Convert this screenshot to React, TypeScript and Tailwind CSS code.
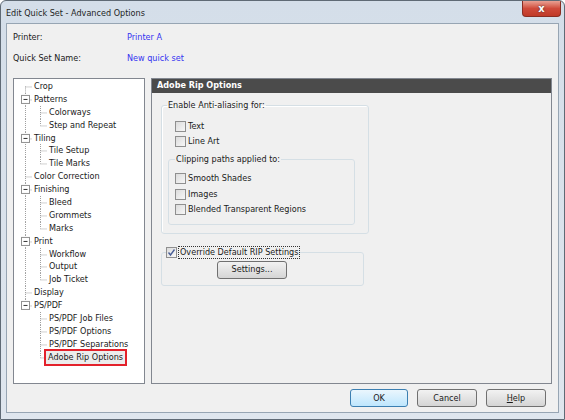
import React from "react";

type Node = { label: string; children?: string[] };

const tree: Node[] = [
  { label: "Crop" },
  { label: "Patterns", children: ["Colorways", "Step and Repeat"] },
  { label: "Tiling", children: ["Tile Setup", "Tile Marks"] },
  { label: "Color Correction" },
  { label: "Finishing", children: ["Bleed", "Grommets", "Marks"] },
  { label: "Print", children: ["Workflow", "Output", "Job Ticket"] },
  { label: "Display" },
  { label: "PS/PDF", children: ["PS/PDF Job Files", "PS/PDF Options", "PS/PDF Separations", "Adobe Rip Options"] },
];

const ROW = 12.9;
const DOT = "#a0a0a0";

function RootGutter({ first, last, expandable }: { first: boolean; last: boolean; expandable: boolean }) {
  const mid = ROW / 2;
  return (
    <svg width="19" height={ROW} className="shrink-0">
      <line x1="11.5" y1={first ? mid : 0} x2="11.5" y2={last ? mid : ROW} stroke={DOT} strokeDasharray="1 1" />
      <line x1="11.5" y1={mid + 0.5} x2="18" y2={mid + 0.5} stroke={DOT} strokeDasharray="1 1" />
      {expandable && (
        <g>
          <rect x="7.5" y={mid - 4} width="8" height="8" fill="#fff" stroke="#919191" />
          <line x1="9.5" y1={mid} x2="13.5" y2={mid} stroke="#333" />
        </g>
      )}
    </svg>
  );
}

function ChildGutter({ rootContinues, last }: { rootContinues: boolean; last: boolean }) {
  const mid = ROW / 2;
  return (
    <svg width="34" height={ROW} className="shrink-0">
      {rootContinues && <line x1="11.5" y1="0" x2="11.5" y2={ROW} stroke={DOT} strokeDasharray="1 1" />}
      <line x1="26.5" y1="0" x2="26.5" y2={last ? mid : ROW} stroke={DOT} strokeDasharray="1 1" />
      <line x1="26.5" y1={mid + 0.5} x2="33" y2={mid + 0.5} stroke={DOT} strokeDasharray="1 1" />
    </svg>
  );
}

function Tree() {
  return (
    <div className="w-[132px] shrink-0 border border-[#828790] bg-white pt-[1px]">
      {tree.map((node, i) => {
        const lastRoot = i === tree.length - 1;
        return (
          <div key={node.label}>
            <div className="flex items-center" style={{ height: ROW }}>
              <RootGutter first={i === 0} last={lastRoot} expandable={!!node.children} />
              <span className="pl-[1px] leading-none">{node.label}</span>
            </div>
            {node.children?.map((c, j) => {
              const selected = c === "Adobe Rip Options";
              return (
                <div key={c} className="flex items-center" style={{ height: ROW }}>
                  <ChildGutter rootContinues={!lastRoot} last={j === node.children!.length - 1} />
                  <span
                    className={
                      selected
                        ? "ml-[-2px] whitespace-nowrap bg-[#ececec] px-[2px] py-[2px] leading-none outline-2 outline-[#e3212b]"
                        : "whitespace-nowrap pl-[1px] leading-none"
                    }
                  >
                    {c}
                  </span>
                </div>
              );
            })}
          </div>
        );
      })}
    </div>
  );
}

function Check({ checked }: { checked?: boolean }) {
  return (
    <span className="flex h-[11px] w-[11px] shrink-0 items-center justify-center border border-[#8f8f8f] bg-gradient-to-br from-[#dcdcdc] to-[#f7f7f7]">
      {checked && (
        <svg width="9" height="9" viewBox="0 0 9 9">
          <path d="M1.5 4.5 L3.5 7 L7.5 1.5" fill="none" stroke="#4a5f97" strokeWidth="1.4" />
        </svg>
      )}
    </span>
  );
}

function CheckRow({ label }: { label: string }) {
  return (
    <div className="flex h-[15.5px] items-center gap-[2px]">
      <Check />
      <span>{label}</span>
    </div>
  );
}

function Button({ children, primary, w }: { children: React.ReactNode; primary?: boolean; w: string }) {
  return (
    <button
      className={
        "flex h-[18px] items-center justify-center rounded-[3px] border leading-none text-[#1a1a1a] " +
        w +
        (primary
          ? " border-[#3c7fb1] bg-gradient-to-b from-[#eaf6fd] to-[#bee6fd]"
          : " border-[#707070] bg-gradient-to-b from-[#f2f2f2] to-[#d5d5d5]")
      }
    >
      {children}
    </button>
  );
}

export default function App() {
  return (
    <div
      className="flex h-[420px] w-[565px] flex-col overflow-hidden rounded-t-[6px] border border-[#5f6a75] bg-gradient-to-b from-[#d4dee9] to-[#dfe6ee] text-[9px] text-[#1a1a1a]"
      style={{ fontFamily: '"DejaVu Sans Condensed", "Liberation Sans", Arial, sans-serif' }}
    >
      <div className="flex h-[22px] shrink-0 items-start justify-between">
        <span className="pl-[5px] pt-[6px] text-[9px] text-[#1e1e1e]">Edit Quick Set - Advanced Options</span>
        <div className="mr-[3px] flex h-[16px] w-[39px] items-center justify-center rounded-b-[4px] border border-t-0 border-[#8a2d22] bg-gradient-to-b from-[#e8a093] via-[#cf4a3a] to-[#c03a28]">
          <span className="text-[11px] font-bold leading-none text-white [text-shadow:0_0_2px_#333]">x</span>
        </div>
      </div>

      <div className="mx-[5px] mb-[6px] flex flex-1 flex-col border border-[#97a5b3] bg-[#f0f0f0] px-[6px]">
        <div className="mt-[7px] flex h-[13px] items-center">
          <span className="w-[114px]">Printer:</span>
          <span className="text-[#3434f0]">Printer A</span>
        </div>
        <div className="mt-[8px] flex h-[13px] items-center">
          <span className="w-[114px]">Quick Set Name:</span>
          <span className="text-[#3434f0]">New quick set</span>
        </div>

        <div className="mt-[13px] flex h-[306px] gap-[6px]">
          <Tree />
          <div className="flex flex-1 flex-col border border-[#828790] bg-[#f0f0f0]">
            <div className="flex h-[14px] items-center bg-[#4b4b4b] pl-[5px] font-bold text-white">Adobe Rip Options</div>

            <fieldset className="ml-[9px] mt-[6px] w-[203px] rounded-[3px] border border-[#d5dfe5] px-[13px] pb-[8px] shadow-[inset_1px_1px_0_#fff]">
              <legend className="-ml-[8px] px-[1px]">Enable Anti-aliasing for:</legend>
              <div className="mt-[6px]">
                <CheckRow label="Text" />
                <CheckRow label="Line Art" />
              </div>
              <fieldset className="-ml-[7px] mt-[3px] w-[187px] rounded-[3px] border border-[#d5dfe5] px-[6px] pb-[6px]">
                <legend className="px-[1px]">Clipping paths applied to:</legend>
                <div className="mt-[5px]">
                  <CheckRow label="Smooth Shades" />
                  <CheckRow label="Images" />
                  <CheckRow label="Blended Transparent Regions" />
                </div>
              </fieldset>
            </fieldset>

            <fieldset className="ml-[9px] mt-[12px] w-[203px] rounded-[3px] border border-[#d5dfe5] pb-[6px]">
              <legend className="ml-[4px] flex items-center gap-[1px]">
                <Check checked />
                <span className="border border-dotted border-[#333] px-[1px] leading-[11px]">Override Default RIP Settings</span>
              </legend>
              <div className="ml-[55px] mt-[2px]">
                <Button w="w-[70px] h-[16px]">Settings...</Button>
              </div>
            </fieldset>
          </div>
        </div>

        <div className="mt-[5px] flex justify-end gap-[9px] pr-[6px]">
          <Button primary w="w-[58px]">OK</Button>
          <Button w="w-[60px]">Cancel</Button>
          <Button w="w-[60px]">
            <span>
              <span className="underline">H</span>elp
            </span>
          </Button>
        </div>
      </div>
    </div>
  );
}
